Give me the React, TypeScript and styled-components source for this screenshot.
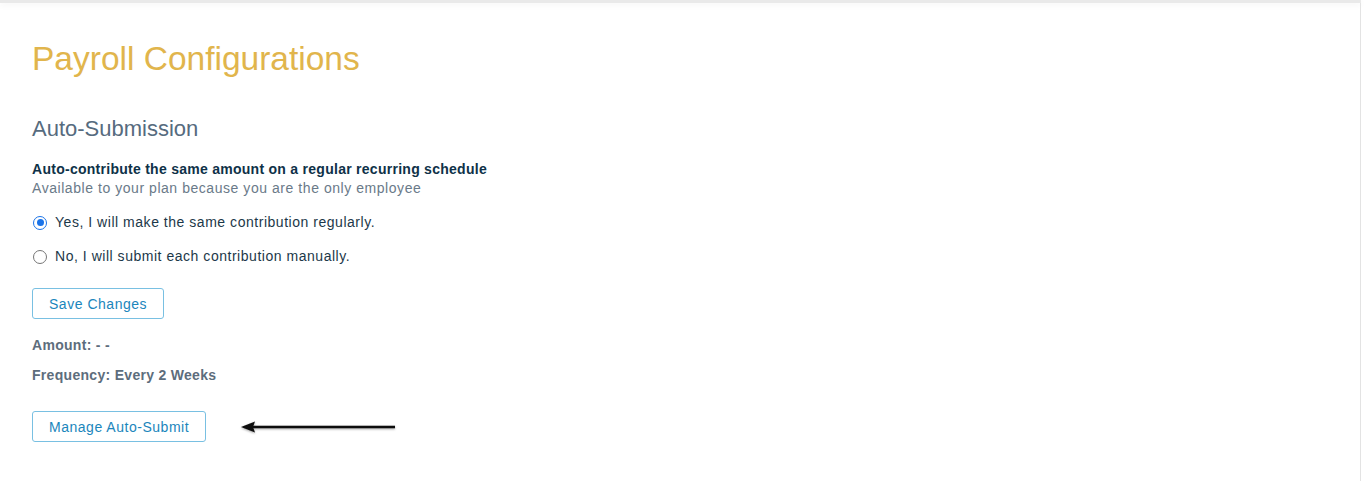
import React, { useState } from "react";
import styled, { createGlobalStyle } from "styled-components";

const GlobalStyle = createGlobalStyle`
  html, body {
    margin: 0;
    padding: 0;
    background: #ffffff;
  }
  body {
    font-family: "Liberation Sans", Arial, Helvetica, sans-serif;
  }
`;

const Page = styled.div`
  width: 1365px;
  height: 481px;
  display: flex;
  flex-direction: column;
  overflow: hidden;
  background: #fff;
`;

const TopBar = styled.div`
  height: 3px;
  flex-shrink: 0;
  width: 1361px;
  background: #e9e9e9;
  box-shadow: 0 2px 6px rgba(0, 0, 0, 0.06);
`;

const Panel = styled.div`
  flex: 1;
  width: 1361px;
  border-right: 1px solid #e3e3e3;
  box-sizing: border-box;
  padding: 36px 32px 0;
  display: flex;
  flex-direction: column;
  align-items: flex-start;
`;

const Title = styled.h1`
  margin: 0;
  font-size: 33.5px;
  line-height: 40px;
  font-weight: 400;
  color: #e1b54c;
`;

const SectionTitle = styled.h2`
  margin: 37px 0 0;
  font-size: 22px;
  line-height: 26px;
  font-weight: 400;
  color: #566b7e;
`;

const Label = styled.div`
  margin-top: 18px;
  font-size: 14px;
  line-height: 19px;
  font-weight: 700;
  color: #0e3148;
  letter-spacing: 0.27px;
`;

const Hint = styled.div`
  font-size: 14px;
  line-height: 19px;
  color: #6a7a89;
  letter-spacing: 0.55px;
`;

const Options = styled.div`
  margin-top: 15px;
  display: flex;
  flex-direction: column;
  gap: 15px;
`;

const Option = styled.label`
  display: flex;
  align-items: center;
  gap: 8px;
  font-size: 14px;
  line-height: 19px;
  color: #1c3849;
  letter-spacing: 0.53px;
  cursor: pointer;
`;

const Radio = styled.span<{ $checked: boolean }>`
  width: 14px;
  height: 14px;
  margin-left: 1px;
  border-radius: 50%;
  box-sizing: border-box;
  border: ${(p) => (p.$checked ? "1.5px solid #1a73e8" : "1px solid #767676")};
  background: #fff;
  display: flex;
  align-items: center;
  justify-content: center;

  &::after {
    content: "";
    width: 7px;
    height: 7px;
    border-radius: 50%;
    background: #1a73e8;
    display: ${(p) => (p.$checked ? "block" : "none")};
  }
`;

const Button = styled.button<{ $top: number }>`
  margin-top: ${(p) => p.$top}px;
  height: 31px;
  padding: 0 16px;
  background: #fff;
  border: 1px solid #79c0e2;
  border-radius: 3px;
  font-family: inherit;
  font-size: 14px;
  letter-spacing: 0.52px;
  color: #1b86bc;
  cursor: pointer;
`;

const Detail = styled.div<{ $top: number }>`
  margin-top: ${(p) => p.$top}px;
  font-size: 14px;
  line-height: 19px;
  font-weight: 700;
  color: #5d6d7c;
  letter-spacing: 0.3px;
`;

const ActionRow = styled.div`
  margin-top: 26px;
  display: flex;
  align-items: center;
  gap: 33px;
`;

const Arrow = () => (
  <svg width="160" height="16" viewBox="0 0 160 16">
    <defs>
      <filter id="shadow" x="-10%" y="-50%" width="120%" height="200%">
        <feDropShadow dx="0" dy="1" stdDeviation="1" floodColor="#000" floodOpacity="0.35" />
      </filter>
    </defs>
    <g filter="url(#shadow)">
      <line x1="12" y1="8" x2="156" y2="8" stroke="#111" strokeWidth="2.4" />
      <polygon points="2,8 16,2.5 14,8 16,13.5" fill="#111" />
    </g>
  </svg>
);

export default function App() {
  const [auto, setAuto] = useState(true);
  return (
    <Page>
      <GlobalStyle />
      <TopBar />
      <Panel>
        <Title>Payroll Configurations</Title>
        <SectionTitle>Auto-Submission</SectionTitle>
        <Label>Auto-contribute the same amount on a regular recurring schedule</Label>
        <Hint>Available to your plan because you are the only employee</Hint>
        <Options>
          <Option onClick={() => setAuto(true)}>
            <Radio $checked={auto} />
            Yes, I will make the same contribution regularly.
          </Option>
          <Option onClick={() => setAuto(false)}>
            <Radio $checked={!auto} />
            No, I will submit each contribution manually.
          </Option>
        </Options>
        <Button $top={22}>Save Changes</Button>
        <Detail $top={17}>Amount: - -</Detail>
        <Detail $top={11}>Frequency: Every 2 Weeks</Detail>
        <ActionRow>
          <Button $top={0}>Manage Auto-Submit</Button>
          <Arrow />
        </ActionRow>
      </Panel>
    </Page>
  );
}
